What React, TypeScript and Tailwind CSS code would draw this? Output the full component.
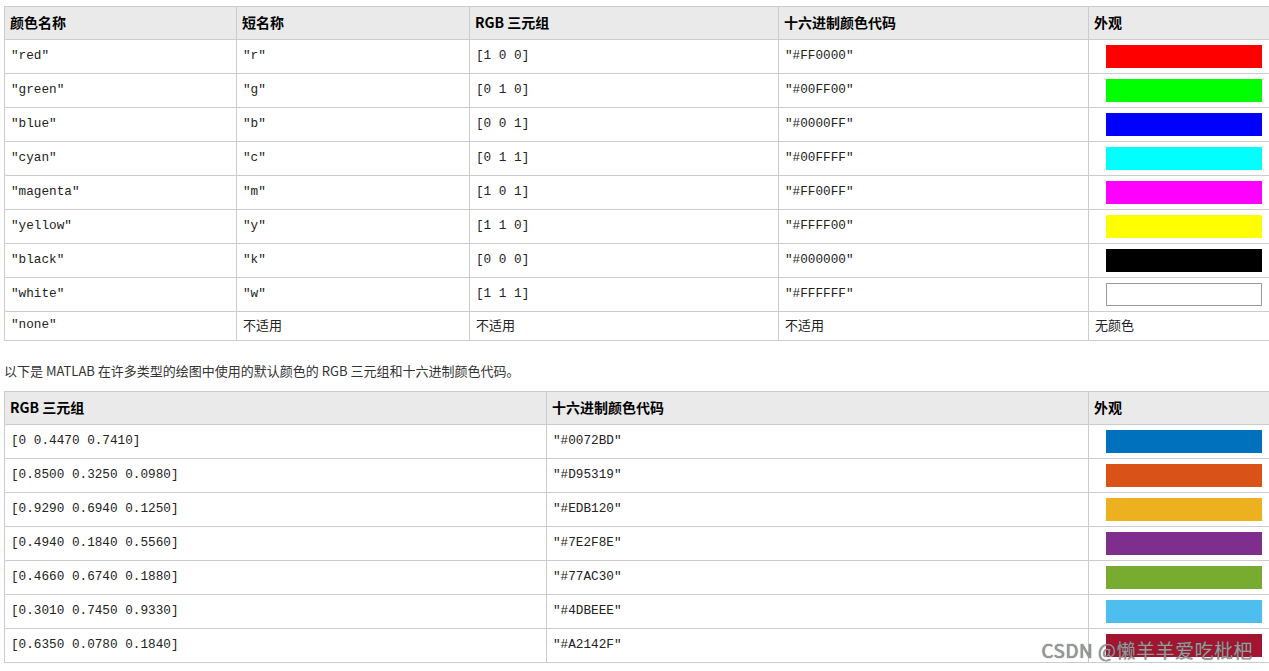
import React from 'react';

const basic = [
  ['"red"', '"r"', '[1 0 0]', '"#FF0000"', '#FF0000'],
  ['"green"', '"g"', '[0 1 0]', '"#00FF00"', '#00FF00'],
  ['"blue"', '"b"', '[0 0 1]', '"#0000FF"', '#0000FF'],
  ['"cyan"', '"c"', '[0 1 1]', '"#00FFFF"', '#00FFFF'],
  ['"magenta"', '"m"', '[1 0 1]', '"#FF00FF"', '#FF00FF'],
  ['"yellow"', '"y"', '[1 1 0]', '"#FFFF00"', '#FFFF00'],
  ['"black"', '"k"', '[0 0 0]', '"#000000"', '#000000'],
  ['"white"', '"w"', '[1 1 1]', '"#FFFFFF"', '#FFFFFF'],
];

const defaults = [
  ['[0 0.4470 0.7410]', '"#0072BD"'],
  ['[0.8500 0.3250 0.0980]', '"#D95319"'],
  ['[0.9290 0.6940 0.1250]', '"#EDB120"'],
  ['[0.4940 0.1840 0.5560]', '"#7E2F8E"'],
  ['[0.4660 0.6740 0.1880]', '"#77AC30"'],
  ['[0.3010 0.7450 0.9330]', '"#4DBEEE"'],
  ['[0.6350 0.0780 0.1840]', '"#A2142F"'],
];

const th = "border border-[#cccccc] bg-[#eaeaea] px-[5px] pb-[1px] text-left font-bold text-black text-[14px]";
const td = "border border-[#cccccc] px-[6px] pb-[2px] text-left text-[#222] align-middle";
const mono = "font-['Liberation_Mono',monospace] text-[12.7px]";

function Swatch({ color }: { color: string }) {
  return (
    <div
      className={`ml-[11px] mt-[2px] h-[23px] w-[156px] ${color === '#FFFFFF' ? 'border border-[#999]' : ''}`}
      style={{ backgroundColor: color }}
    />
  );
}

export default function App() {
  return (
    <div className="relative h-[671px] w-[1269px] overflow-hidden bg-white font-['Noto_Sans_CJK_SC','Noto_Sans',sans-serif]">
      <div className="pl-[4px] pt-[6px]">
        <table className="w-[1270px] table-fixed border-collapse">
          <colgroup>
            <col className="w-[232px]" />
            <col className="w-[233px]" />
            <col className="w-[309px]" />
            <col className="w-[310px]" />
            <col />
          </colgroup>
          <thead>
            <tr className="h-[33px]">
              <th className={th}>颜色名称</th>
              <th className={th}>短名称</th>
              <th className={th}>RGB 三元组</th>
              <th className={th}>十六进制颜色代码</th>
              <th className={th}>外观</th>
            </tr>
          </thead>
          <tbody>
            {basic.map((r) => (
              <tr key={r[0]} className="h-[34px]">
                <td className={`${td} ${mono}`}>{r[0]}</td>
                <td className={`${td} ${mono}`}>{r[1]}</td>
                <td className={`${td} ${mono}`}>{r[2]}</td>
                <td className={`${td} ${mono}`}>{r[3]}</td>
                <td className={td}><Swatch color={r[4]} /></td>
              </tr>
            ))}
            <tr className="h-[29px]">
              <td className={`${td} ${mono}`}>"none"</td>
              <td className={`${td} text-[13px]`}>不适用</td>
              <td className={`${td} text-[13px]`}>不适用</td>
              <td className={`${td} text-[13px]`}>不适用</td>
              <td className={`${td} text-[13px]`}>无颜色</td>
            </tr>
          </tbody>
        </table>

        <p className="mt-[19px] mb-[9px] text-[13px] leading-[22px] text-[#333]">
          以下是 MATLAB 在许多类型的绘图中使用的默认颜色的 RGB 三元组和十六进制颜色代码。
        </p>

        <table className="w-[1270px] table-fixed border-collapse">
          <colgroup>
            <col className="w-[542px]" />
            <col className="w-[542px]" />
            <col />
          </colgroup>
          <thead>
            <tr className="h-[33px]">
              <th className={th}>RGB 三元组</th>
              <th className={th}>十六进制颜色代码</th>
              <th className={th}>外观</th>
            </tr>
          </thead>
          <tbody>
            {defaults.map((r) => (
              <tr key={r[1]} className="h-[34px]">
                <td className={`${td} ${mono}`}>{r[0]}</td>
                <td className={`${td} ${mono}`}>{r[1]}</td>
                <td className={td}><Swatch color={r[1].replace(/"/g, '')} /></td>
              </tr>
            ))}
          </tbody>
        </table>
      </div>

      <div className="absolute right-[16px] bottom-[7px] text-[19px] tracking-[0.5px] text-[#9a9a9a] [text-shadow:0_0_1px_#444] font-['Noto_Sans_CJK_SC',sans-serif]">
        CSDN @懒羊羊爱吃枇杷
      </div>
    </div>
  );
}
